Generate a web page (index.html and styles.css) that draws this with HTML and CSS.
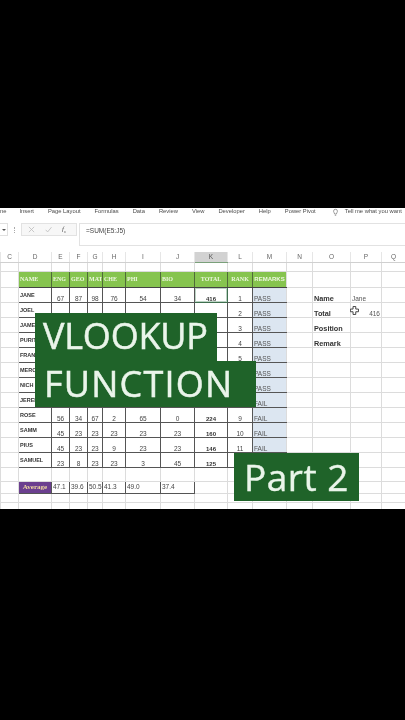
FILE: index.html
```html
<!DOCTYPE html>
<html lang="en">
<head>
<meta charset="utf-8">
<title>VLOOKUP Function Part 2</title>
<link rel="stylesheet" href="styles.css">
</head>
<body>
<main class="frame">
  <section class="excel">
    <nav class="tabs">
      <span class="tab-clip">ne</span><span>Insert</span><span>Page Layout</span><span>Formulas</span><span>Data</span><span>Review</span><span>View</span><span>Developer</span><span>Help</span><span>Power Pivot</span>
      <svg class="bulb" viewBox="0 0 10 12"><path d="M2.2 4.2a2.8 2.8 0 1 1 5.6 0c0 1.5-1.4 2.4-1.6 4H3.8c-.2-1.6-1.6-2.5-1.6-4zM4 10h2" fill="none" stroke="#666" stroke-width=".9"/></svg>
      <span class="tell">Tell me what you want</span>
    </nav>
    <div class="formula-row">
      <div class="name-box"><i class="caret"></i></div>
      <div class="grip"></div>
      <div class="fx-box">
        <svg class="fx-icon" viewBox="0 0 8 8"><path d="M1 1l6 6M7 1L1 7" stroke="#bbb" stroke-width=".9"/></svg>
        <svg class="fx-icon" viewBox="0 0 8 8"><path d="M.8 4.4l2.2 2.4L7.4 1.4" fill="none" stroke="#bbb" stroke-width=".9"/></svg>
        <span class="fx">f<sub>x</sub></span>
      </div>
      <div class="formula-input">=SUM(E5:J5)</div>
    </div>
    <div class="sheet">
      <table class="grid">
        <colgroup>
          <col class="c18"><col class="c33"><col class="c18"><col class="c18"><col class="c15"><col class="c23"><col class="c35"><col class="c34"><col class="c33"><col class="c25"><col class="c34"><col class="c26"><col class="c38"><col class="c31"><col class="c24">
        </colgroup>
        <tr class="r-head heading"><td>C</td><td>D</td><td>E</td><td>F</td><td>G</td><td>H</td><td>I</td><td>J</td><td class="active-col">K</td><td>L</td><td>M</td><td>N</td><td>O</td><td>P</td><td>Q</td></tr>
        <tr class="r-blank"><td></td><td></td><td></td><td></td><td></td><td></td><td></td><td></td><td></td><td></td><td class="dash"></td><td></td><td></td><td></td><td></td></tr>
        <tr class="r-green"><td></td><td class="gh l">NAME</td><td class="gh l">ENG</td><td class="gh l">GEO</td><td class="gh l">MAT</td><td class="gh l">CHE</td><td class="gh l">PHI</td><td class="gh l">BIO</td><td class="gh">TOTAL</td><td class="gh">RANK</td><td class="gh dash">REMARKS</td><td></td><td></td><td></td><td></td></tr>
        <tr class="r"><td></td><td class="nm">JANE</td><td class="n">67</td><td class="n">87</td><td class="n">98</td><td class="n">76</td><td class="n">54</td><td class="n">34</td><td class="n b sel">416</td><td class="n">1</td><td class="rm">PASS</td><td></td><td class="lb">Name</td><td class="v">Jane</td><td></td></tr>
        <tr class="r"><td></td><td class="nm">JOEL</td><td class="n"></td><td class="n"></td><td class="n"></td><td class="n"></td><td class="n"></td><td class="n"></td><td class="n b"></td><td class="n">2</td><td class="rm">PASS</td><td></td><td class="lb">Total</td><td class="v r-al">416</td><td></td></tr>
        <tr class="r"><td></td><td class="nm">JAME</td><td class="n"></td><td class="n"></td><td class="n"></td><td class="n"></td><td class="n"></td><td class="n"></td><td class="n b"></td><td class="n">3</td><td class="rm">PASS</td><td></td><td class="lb">Position</td><td></td><td></td></tr>
        <tr class="r"><td></td><td class="nm">PURIT</td><td class="n"></td><td class="n"></td><td class="n"></td><td class="n"></td><td class="n"></td><td class="n"></td><td class="n b"></td><td class="n">4</td><td class="rm">PASS</td><td></td><td class="lb">Remark</td><td></td><td></td></tr>
        <tr class="r"><td></td><td class="nm">FRAN</td><td class="n"></td><td class="n"></td><td class="n"></td><td class="n"></td><td class="n"></td><td class="n"></td><td class="n b"></td><td class="n">5</td><td class="rm">PASS</td><td></td><td></td><td></td><td></td></tr>
        <tr class="r"><td></td><td class="nm">MERC</td><td class="n"></td><td class="n"></td><td class="n"></td><td class="n"></td><td class="n"></td><td class="n"></td><td class="n b"></td><td class="n"></td><td class="rm">PASS</td><td></td><td></td><td></td><td></td></tr>
        <tr class="r"><td></td><td class="nm">NICH</td><td class="n"></td><td class="n"></td><td class="n"></td><td class="n"></td><td class="n"></td><td class="n"></td><td class="n b"></td><td class="n"></td><td class="rm">PASS</td><td></td><td></td><td></td><td></td></tr>
        <tr class="r"><td></td><td class="nm">JEREM</td><td class="n"></td><td class="n"></td><td class="n"></td><td class="n"></td><td class="n"></td><td class="n"></td><td class="n b"></td><td class="n"></td><td class="rm">FAIL</td><td></td><td></td><td></td><td></td></tr>
        <tr class="r"><td></td><td class="nm">ROSE</td><td class="n">56</td><td class="n">34</td><td class="n">67</td><td class="n">2</td><td class="n">65</td><td class="n">0</td><td class="n b">224</td><td class="n">9</td><td class="rm">FAIL</td><td></td><td></td><td></td><td></td></tr>
        <tr class="r"><td></td><td class="nm">SAMM</td><td class="n">45</td><td class="n">23</td><td class="n">23</td><td class="n">23</td><td class="n">23</td><td class="n">23</td><td class="n b">160</td><td class="n">10</td><td class="rm">FAIL</td><td></td><td></td><td></td><td></td></tr>
        <tr class="r"><td></td><td class="nm">PIUS</td><td class="n">45</td><td class="n">23</td><td class="n">23</td><td class="n">9</td><td class="n">23</td><td class="n">23</td><td class="n b">146</td><td class="n">11</td><td class="rm">FAIL</td><td></td><td></td><td></td><td></td></tr>
        <tr class="r"><td></td><td class="nm">SAMUEL</td><td class="n">23</td><td class="n">8</td><td class="n">23</td><td class="n">23</td><td class="n">3</td><td class="n">45</td><td class="n b">125</td><td class="n"></td><td class="rm"></td><td></td><td></td><td></td><td></td></tr>
        <tr class="r-gap"><td></td><td></td><td></td><td></td><td></td><td></td><td></td><td></td><td></td><td></td><td class="dash"></td><td></td><td></td><td></td><td></td></tr>
        <tr class="r-avg"><td></td><td class="avg-label">Average</td><td class="avg">47.1</td><td class="avg">39.6</td><td class="avg">50.5</td><td class="avg">41.3</td><td class="avg">49.0</td><td class="avg">37.4</td><td></td><td></td><td class="dash"></td><td></td><td></td><td></td><td></td></tr>
        <tr class="r-blank"><td></td><td></td><td></td><td></td><td></td><td></td><td></td><td></td><td></td><td></td><td class="dash"></td><td></td><td></td><td></td><td></td></tr>
        <tr class="r-end"><td></td><td></td><td></td><td></td><td></td><td></td><td></td><td></td><td></td><td></td><td class="dash"></td><td></td><td></td><td></td><td></td></tr>
      </table>
      <svg class="cursor" viewBox="0 0 10 10"><path d="M3.4 .6h3v2.8h3v3h-3v3h-3v-3h-3v-3h3z" fill="#fff" stroke="#333" stroke-width="1"/></svg>
      <div class="banner title">
        <div class="line line-1">VLOOKUP</div>
        <div class="line line-2">FUNCTION</div>
      </div>
      <div class="banner part">Part 2</div>
    </div>
  </section>
</main>
</body>
</html>
```
FILE: styles.css
```css
* { box-sizing: border-box; }
html, body { margin: 0; background: #000; }
.frame { width: 405px; height: 720px; padding-top: 208px; background: #000; overflow: hidden; }
.excel {
  width: 405px; height: 301px; background: #fff; overflow: hidden;
  font-family: "Liberation Sans", Arial, sans-serif; color: #444;
  filter: blur(.4px);
}
.tabs { height: 15px; display: flex; align-items: flex-start; gap: 14px; font-size: 5.8px; line-height: 7px; color: #4a4a4a; white-space: nowrap; }
.tab-clip { margin-right: -1px; }
.bulb { width: 7px; height: 9px; margin-left: 2px; margin-right: -8px; flex: none; }
.tell { flex: none; }
.formula-row { height: 29px; display: flex; align-items: flex-start; }
.name-box { width: 8px; height: 13px; border: 1px solid #e0e0e0; border-left: 0; display: flex; align-items: center; justify-content: center; }
.caret { width: 0; height: 0; border: 2px solid transparent; border-top: 2.5px solid #555; border-bottom: 0; }
.grip { width: 1px; height: 6px; margin: 4px 6px 0 6px; border-left: 1px dotted #aaa; }
.fx-box { width: 56px; height: 13px; border: 1px solid #e2e2e2; background: #f7f7f7; display: flex; align-items: center; gap: 10px; padding-left: 6px; }
.fx-icon { width: 7px; height: 7px; }
.fx { font: italic 7px "Liberation Serif", serif; color: #555; }
.fx sub { font-size: 4px; }
.formula-input { flex: 1; height: 23px; margin-left: 2px; border: 1px solid #e2e2e2; border-right: 0; padding: 2px 0 0 6px; font-size: 6.5px; line-height: 10px; color: #444; }
.sheet { position: relative; height: 257px; }
.grid { border-collapse: collapse; table-layout: fixed; width: 405px; }
.grid td { padding: 0; border: 1px solid #dcdcdc; font-size: 6px; line-height: 6px; overflow: hidden; white-space: nowrap; }
.c18 { width: 18px; } .c33 { width: 33px; } .c15 { width: 15px; } .c23 { width: 23px; }
.c35 { width: 35px; } .c34 { width: 34px; } .c25 { width: 25px; } .c26 { width: 26px; }
.c38 { width: 38px; } .c31 { width: 31px; } .c24 { width: 24px; }
.r-head td { height: 10px; }
.heading td { text-align: center; color: #666; font-size: 6.5px; background: #fff; border-top: 0; border-bottom: 1px solid #d0d0d0; border-left-color: #e6e6e6; border-right-color: #e6e6e6; }
.heading .active-col { background: #d2d2d2; border-bottom: 1px solid #7aa07a; color: #555; }
.r-blank td { height: 9px; }
.r-green td { height: 16px; }
.r td { height: 15px; }
.r-gap td { height: 14px; }
.r-avg td { height: 12px; }
.r-end td { height: 7px; border-bottom: 0; }
.grid .gh {
  background: #86c44f; color: #eef7e2; font: bold 6px "Liberation Serif", serif; text-align: center;
  border: 1px solid #4f6b38; border-bottom-color: #444;
}
.grid .gh.l { text-align: left; padding-left: 1px; }
.grid .gh.dash { border-right: 1px dashed #8a9a8a; font-family: "Liberation Sans", sans-serif; }
.grid .nm { font-size: 5.5px; font-weight: bold; color: #333; vertical-align: top; padding: 4px 0 0 1px; border: 1px solid #555; }
.grid .n { text-align: center; vertical-align: bottom; color: #444; border: 1px solid #555; font-size: 6.5px; }
.grid .b { font-weight: bold; color: #333; font-size: 6px; }
.grid .sel { border: 1px solid #3f6f4f; box-shadow: inset 0 0 0 1px #bcd4c4; }
.grid .rm { background: #dce6f1; color: #555; font-size: 6.5px; padding-left: 1px; vertical-align: bottom; border: 1px solid #555; border-right: 1px dashed #9fb0c0; }
.grid .dash { border-right: 1px dashed #b0b0b0; }
.grid .lb { font-size: 7.3px; font-weight: bold; color: #333; padding-left: 1px; vertical-align: bottom; }
.grid .v { color: #555; font-size: 6.5px; padding-left: 1px; vertical-align: bottom; }
.grid .r-al { text-align: right; padding-right: 1px; padding-left: 0; }
.grid .avg-label { background: #6b3f8f; color: #f0d9a0; font: bold 7px "Liberation Serif", serif; text-align: center; border: 1px solid #555; }
.grid .avg { font-size: 6.5px; color: #444; padding-left: 1px; border: 1px solid #555; }
.cursor { position: absolute; left: 350px; top: 54px; width: 9px; height: 9px; }
.banner { position: absolute; color: #eaf5ea; font-family: "Open Sans", "Noto Sans", sans-serif; white-space: nowrap; }
.title { left: 35px; top: 61px; display: flex; flex-direction: column; align-items: flex-start; }
.line { background: #1f6329; font-size: 36px; line-height: 46px; -webkit-text-stroke: .5px #eaf5ea; letter-spacing: -.2px; }
.line-1 { width: 182px; height: 48px; padding-left: 8px; }
.line-2 { width: 221px; height: 46px; padding-left: 9px; letter-spacing: 1.2px; }
.part { left: 234px; top: 201px; width: 125px; height: 48px; background: #1f6329; font-size: 37px; line-height: 48px; text-align: center; -webkit-text-stroke: .4px #eaf5ea; letter-spacing: .5px; }
```
